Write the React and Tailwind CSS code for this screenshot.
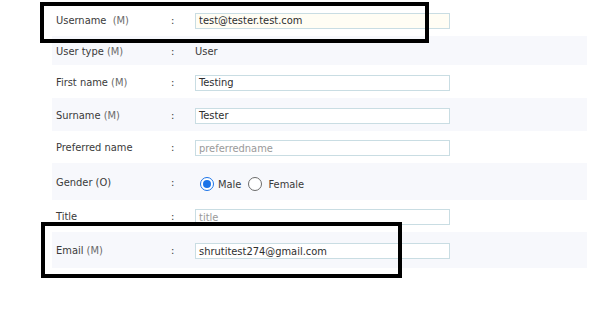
import React from "react";

const font = { fontFamily: '"DejaVu Sans Condensed", "DejaVu Sans", Tahoma, sans-serif' };

function Label({ name, tag }) {
  return (
    <span className="text-[#3a3a3a] whitespace-pre">
      {name}
      {tag && <span className="text-[#6b6b6b]">{tag}</span>}
    </span>
  );
}

function Input({ value, placeholder, yellow }) {
  return (
    <div
      className={`w-[255px] h-[16px] border border-[#c9dde3] flex items-center px-[3px] pt-[2px] ${
        yellow ? "bg-[#fffdf4]" : "bg-white"
      }`}
    >
      {value ? (
        <span className="text-[#2e2e2e]">{value}</span>
      ) : (
        <span className="text-[#9a9a9a]">{placeholder}</span>
      )}
    </div>
  );
}

function Row({ h, striped, label, children }) {
  return (
    <div
      className={`flex items-center ${h} ${striped ? "bg-[#f7f8fc]" : "bg-white"}`}
    >
      <div className="w-[119px] pl-[4px] pt-[3px]">{label}</div>
      <div className="w-[24px] text-[#3a3a3a] pt-[3px]">:</div>
      <div className="flex-1 flex items-center pt-[2px]">{children}</div>
    </div>
  );
}

export default function App() {
  return (
    <div className="relative w-[608px] h-[314px] bg-white text-[11px] overflow-hidden" style={font}>
      <div className="pt-[3px] pl-[52px] w-[587px]">
        <Row h="h-[33px]" label={<Label name="Username  " tag="(M)" />}>
          <Input value="test@tester.test.com" yellow />
        </Row>
        <Row h="h-[29px]" striped label={<Label name="User type " tag="(M)" />}>
          <span className="text-[#3a3a3a] pt-[1px]">User</span>
        </Row>
        <Row h="h-[33px]" label={<Label name="First name " tag="(M)" />}>
          <Input value="Testing" />
        </Row>
        <Row h="h-[33px]" striped label={<Label name="Surname " tag="(M)" />}>
          <Input value="Tester" />
        </Row>
        <Row h="h-[32px]" label={<Label name="Preferred name" />}>
          <Input placeholder="preferredname" />
        </Row>
        <Row h="h-[37px]" striped label={<Label name="Gender (O)" />}>
          <div className="flex items-center gap-[4px] pl-[5px] pt-[3px]">
            <span className="w-[14px] h-[14px] rounded-full border border-[#1a73e8] bg-white flex items-center justify-center">
              <span className="w-[8px] h-[8px] rounded-full bg-[#1a73e8]" />
            </span>
            <span className="text-[#3a3a3a] mr-[3px] pt-[3px]">Male</span>
            <span className="w-[14px] h-[14px] rounded-full border border-[#6b6b6b] bg-white" />
            <span className="text-[#3a3a3a] pt-[3px] ml-[2px]">Female</span>
          </div>
        </Row>
        <Row h="h-[32px]" label={<Label name="Title" />}>
          <Input placeholder="title" />
        </Row>
        <Row h="h-[36px]" striped label={<Label name="Email " tag="(M)" />}>
          <Input value="shrutitest274@gmail.com" />
        </Row>
      </div>
      <div className="absolute left-[40px] top-[2px] w-[389px] h-[41px] border-[4px] border-black" />
      <div className="absolute left-[41px] top-[222px] w-[361px] h-[56px] border-[4px] border-black" />
    </div>
  );
}
